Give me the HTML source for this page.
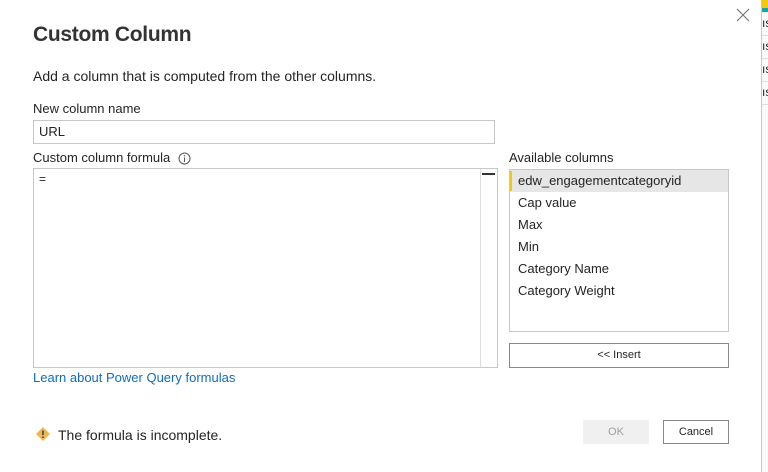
<!DOCTYPE html>
<html><head><style>
*{margin:0;padding:0;box-sizing:border-box}
body{width:768px;height:472px;background:#fff;font-family:"Liberation Sans",sans-serif;color:#252423;position:relative;overflow:hidden}
.a{position:absolute}
.t{font-size:13px;white-space:nowrap}
</style></head><body>
<div class="a" style="left:761px;top:0;width:7px;height:472px;background:#fafafa;border-left:1px solid #c8c8c8"></div>
<div class="a" style="left:762px;top:0;width:6px;height:8px;background:#f2c811"></div>
<div class="a" style="left:762px;top:8px;width:6px;height:4px;background:#1aa5a5"></div>
<div class="a t" style="left:762px;top:16px;font-size:12px">ıs</div>
<div class="a" style="left:762px;top:35px;width:6px;height:1px;background:#ddd"></div>
<div class="a t" style="left:762px;top:39px;font-size:12px">ıs</div>
<div class="a" style="left:762px;top:58px;width:6px;height:1px;background:#ddd"></div>
<div class="a t" style="left:762px;top:62px;font-size:12px">ıs</div>
<div class="a" style="left:762px;top:81px;width:6px;height:1px;background:#ddd"></div>
<div class="a t" style="left:762px;top:85px;font-size:12px">ıs</div>
<div class="a" style="left:762px;top:104px;width:6px;height:1px;background:#ddd"></div>

<svg class="a" style="left:736px;top:8px" width="14" height="14"><path d="M1 1L13 13M13 1L1 13" stroke="#777" stroke-width="1.2"/></svg>
<div class="a" style="left:33px;top:23px;font-size:21px;font-weight:bold;color:#333;letter-spacing:-0.3px">Custom Column</div>
<div class="a t" style="left:33px;top:68px;font-size:14px">Add a column that is computed from the other columns.</div>
<div class="a t" style="left:33px;top:101px">New column name</div>
<div class="a" style="left:33px;top:120px;width:462px;height:24px;border:1px solid #c8c8c8"></div>
<div class="a t" style="left:39px;top:124px">URL</div>
<div class="a t" style="left:33px;top:150px">Custom column formula</div>
<svg class="a" style="left:178px;top:152px" width="13" height="13"><circle cx="6.5" cy="6.5" r="5.5" fill="none" stroke="#555"/><path d="M6.5 5.5V10" stroke="#555"/><circle cx="6.5" cy="3.8" r=".7" fill="#555"/></svg>
<div class="a" style="left:33px;top:168px;width:465px;height:200px;border:1px solid #c8c8c8"></div>
<div class="a" style="left:480px;top:169px;width:1px;height:198px;background:#ddd"></div>
<div class="a" style="left:482px;top:173px;width:13px;height:2px;background:#333"></div>
<div class="a t" style="left:39px;top:172px;font-size:12px">=</div>
<div class="a t" style="left:509px;top:150px">Available columns</div>
<div class="a" style="left:509px;top:169px;width:220px;height:163px;border:1px solid #c8c8c8"></div>
<div class="a" style="left:510px;top:170px;width:218px;height:22px;background:#e6e6e6"></div>
<div class="a" style="left:510px;top:171px;width:2px;height:20px;background:#f2c811"></div>
<div class="a t" style="left:518px;top:173px">edw_engagementcategoryid</div>
<div class="a t" style="left:518px;top:195px">Cap value</div>
<div class="a t" style="left:518px;top:217px">Max</div>
<div class="a t" style="left:518px;top:239px">Min</div>
<div class="a t" style="left:518px;top:261px">Category Name</div>
<div class="a t" style="left:518px;top:283px">Category Weight</div>
<div class="a" style="left:509px;top:343px;width:220px;height:25px;border:1px solid #8a8886;font-size:11px;text-align:center;line-height:23px">&lt;&lt; Insert</div>
<div class="a t" style="left:33px;top:370px;color:#0f6cbd">Learn about Power Query formulas</div>
<svg class="a" style="left:35px;top:426px" width="16" height="16"><path d="M8 1L15 8L8 15L1 8Z" fill="#f0b850"/><path d="M8 4.5V9" stroke="#444" stroke-width="1.6"/><circle cx="8" cy="11.2" r=".9" fill="#444"/></svg>
<div class="a t" style="left:58px;top:427px;font-size:14px">The formula is incomplete.</div>
<div class="a" style="left:583px;top:420px;width:66px;height:24px;background:#f0f0f0;color:#a19f9d;font-size:11px;text-align:center;line-height:24px">OK</div>
<div class="a" style="left:663px;top:420px;width:66px;height:24px;border:1px solid #8a8886;font-size:11px;text-align:center;line-height:22px">Cancel</div>
</body></html>
